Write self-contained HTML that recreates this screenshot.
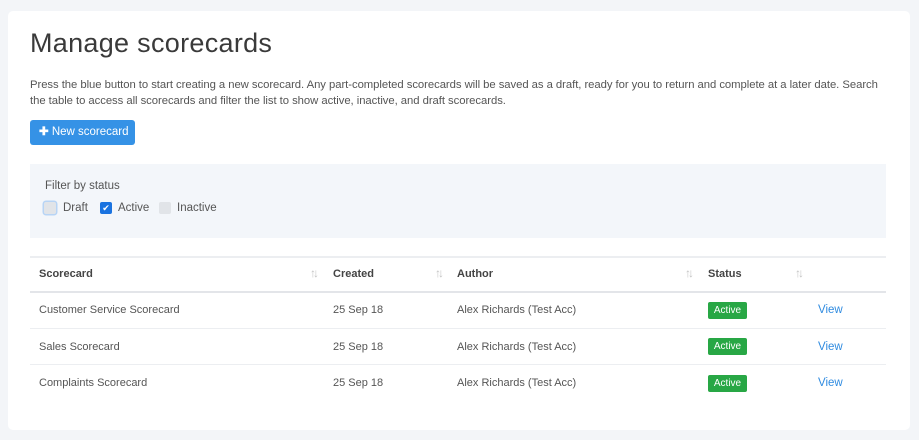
<!DOCTYPE html>
<html><head><style>
*{box-sizing:border-box;margin:0;padding:0}
body{width:919px;height:440px;background:#f3f5f8;font-family:"Liberation Sans",sans-serif;color:#444;position:relative;overflow:hidden}
.card{position:absolute;left:8px;top:11px;width:902px;height:419px;background:#fff;border-radius:5px}
.abs{position:absolute}
h1{position:absolute;left:30px;top:28px;font-size:27px;font-weight:normal;color:#3a3a3a;letter-spacing:0.3px}
p{position:absolute;left:30px;top:77px;width:870px;font-size:11.3px;line-height:16px;color:#555;letter-spacing:-0.05px}
.btn{position:absolute;left:30px;top:120px;width:105px;height:25px;background:#3592e6;border-radius:3px;color:#fff;font-size:11.5px;line-height:25px;padding-left:9px}
.filter{position:absolute;left:30px;top:164px;width:856px;height:74px;background:#f3f6fa}
.cb{position:absolute;width:12px;height:12px;border-radius:2px;background:#e1e4e8;top:202px}
.lbl{position:absolute;top:202px;font-size:11.5px;line-height:13px;color:#555}
.line{position:absolute;left:30px;width:856px;background:#eceef1}
.th{position:absolute;top:268px;font-size:11px;font-weight:bold;color:#444}
.td{position:absolute;font-size:11px;color:#555}
.sort{position:absolute;top:266px;font-size:12px;color:#c4c4c4;letter-spacing:-3px}
.badge{position:absolute;left:708px;width:39px;height:17px;background:#28a745;border-radius:2px;color:#fff;font-size:10px;display:flex;align-items:center;justify-content:center}
.view{position:absolute;left:818px;font-size:11.5px;color:#2f8be0}
</style></head><body>
<div class="card"></div>
<h1>Manage scorecards</h1>
<p>Press the blue button to start creating a new scorecard. Any part-completed scorecards will be saved as a draft, ready for you to return and complete at a later date. Search<br>the table to access all scorecards and filter the list to show active, inactive, and draft scorecards.</p>
<div class="btn"><b>✚</b> New scorecard</div>
<div class="filter"></div>
<div class="abs" style="left:45px;top:180px;font-size:11.5px;color:#555">Filter by status</div>
<div class="cb" style="left:44px;box-shadow:0 0 0 1.5px #b7d4f5"></div><div class="lbl" style="left:63px">Draft</div>
<div class="cb" style="left:100px;background:#1a73e0;color:#fff;font-size:9px;line-height:12px;text-align:center">✔</div><div class="lbl" style="left:118px">Active</div>
<div class="cb" style="left:159px"></div><div class="lbl" style="left:177px">Inactive</div>
<div class="line" style="top:256px;height:2px"></div>
<div class="line" style="top:291px;height:2px;background:#e3e5e9"></div>
<div class="line" style="top:328px;height:1px"></div>
<div class="line" style="top:364px;height:1px"></div>
<div class="th" style="left:39px">Scorecard</div><div class="sort" style="left:310px">↑↓</div>
<div class="th" style="left:333px">Created</div><div class="sort" style="left:435px">↑↓</div>
<div class="th" style="left:457px">Author</div><div class="sort" style="left:685px">↑↓</div>
<div class="th" style="left:708px">Status</div><div class="sort" style="left:795px">↑↓</div>
<div class="td" style="left:39px;top:304px">Customer Service Scorecard</div><div class="td" style="left:333px;top:304px">25 Sep 18</div><div class="td" style="left:457px;top:304px">Alex Richards (Test Acc)</div><div class="badge" style="top:302px">Active</div><div class="view" style="top:304px">View</div>
<div class="td" style="left:39px;top:341px">Sales Scorecard</div><div class="td" style="left:333px;top:341px">25 Sep 18</div><div class="td" style="left:457px;top:341px">Alex Richards (Test Acc)</div><div class="badge" style="top:338px">Active</div><div class="view" style="top:341px">View</div>
<div class="td" style="left:39px;top:377px">Complaints Scorecard</div><div class="td" style="left:333px;top:377px">25 Sep 18</div><div class="td" style="left:457px;top:377px">Alex Richards (Test Acc)</div><div class="badge" style="top:375px">Active</div><div class="view" style="top:377px">View</div>
</body></html>
